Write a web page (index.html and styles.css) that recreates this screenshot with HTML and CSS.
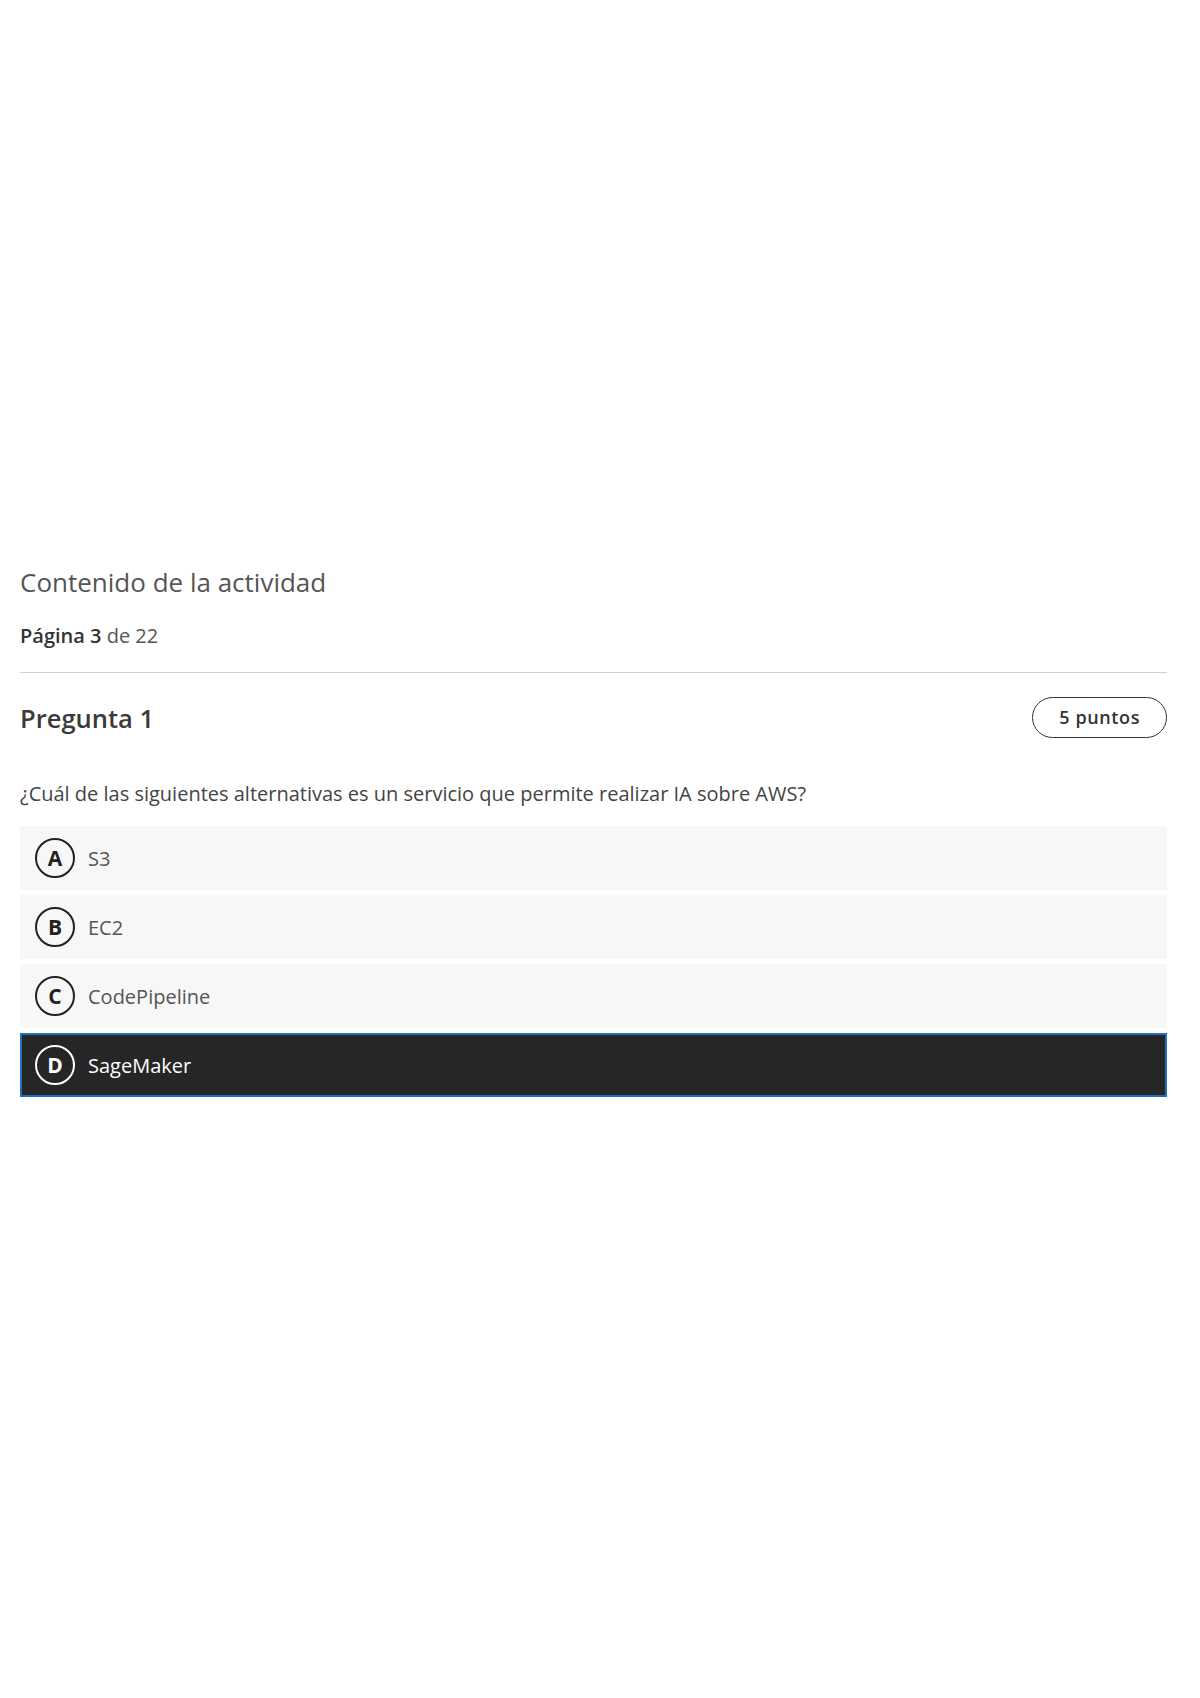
FILE: index.html
```html
<!DOCTYPE html>
<html lang="es">
<head>
    <meta charset="UTF-8">
    <meta name="viewport" content="width=device-width, initial-scale=1.0">
    <title>Contenido de la actividad</title>
    <link rel="stylesheet" href="styles.css">
</head>
<body>
    <div class="activity">
        <h1 class="activity-title">Contenido de la actividad</h1>
        <p class="page-count"><strong>Página 3</strong> de 22</p>

        <div class="question">
            <div class="question-header">
                <h2>Pregunta 1</h2>
                <span class="points">5 puntos</span>
            </div>

            <p class="question-text">¿Cuál de las siguientes alternativas es un servicio que permite realizar IA sobre AWS?</p>

            <ul class="options">
                <li class="option">
                    <span class="option-letter">A</span>
                    <span class="option-label">S3</span>
                </li>
                <li class="option">
                    <span class="option-letter">B</span>
                    <span class="option-label">EC2</span>
                </li>
                <li class="option">
                    <span class="option-letter">C</span>
                    <span class="option-label">CodePipeline</span>
                </li>
                <li class="option selected">
                    <span class="option-letter">D</span>
                    <span class="option-label">SageMaker</span>
                </li>
            </ul>
        </div>
    </div>
</body>
</html>
```

FILE: styles.css
```css
body {
    font-family: 'Open Sans', 'Liberation Sans', sans-serif;
    color: #333;
    background-color: #fff;
    margin: 0;
}

.activity {
    margin: 0 33px 0 20px;
    padding-top: 564px;
}

.activity-title {
    font-size: 26px;
    font-weight: 400;
    line-height: 36px;
    color: #555;
    margin: 0;
}

.page-count {
    font-size: 20px;
    line-height: 28px;
    color: #555;
    margin: 22px 0 0;
}

.page-count strong {
    font-weight: 600;
    color: #333;
}

.question {
    border-top: 1px solid #d0d0d0;
    margin-top: 22px;
    padding-top: 24px;
}

.question-header {
    display: flex;
    justify-content: space-between;
    align-items: center;
}

.question-header h2 {
    font-size: 25.5px;
    font-weight: 600;
    line-height: 40px;
    color: #3a3a3a;
    margin: 0;
}

.points {
    font-size: 18px;
    font-weight: 600;
    letter-spacing: 0.6px;
    color: #333;
    border: 1.5px solid #333;
    border-radius: 21px;
    padding: 0 26px;
    height: 39px;
    line-height: 39px;
}

.question-text {
    font-size: 20px;
    line-height: 28px;
    color: #444;
    margin: 42px 0 18px;
}

.options {
    list-style: none;
    margin: 0;
    padding: 0;
    display: flex;
    flex-direction: column;
    gap: 5px;
}

.option {
    display: flex;
    align-items: center;
    gap: 13px;
    height: 64px;
    padding: 0 13px;
    background-color: #f7f7f7;
    border: 2px solid transparent;
    box-sizing: border-box;
    font-size: 20px;
    color: #555;
}

.option-letter {
    box-sizing: border-box;
    width: 40px;
    height: 40px;
    border: 2px solid #222;
    border-radius: 50%;
    display: flex;
    align-items: center;
    justify-content: center;
    font-size: 21px;
    font-weight: 700;
    color: #222;
}

.option.selected {
    background-color: #262626;
    border-color: #1f6fc0;
    color: #fff;
}

.option.selected .option-letter {
    border-color: #fff;
    color: #fff;
}
```
